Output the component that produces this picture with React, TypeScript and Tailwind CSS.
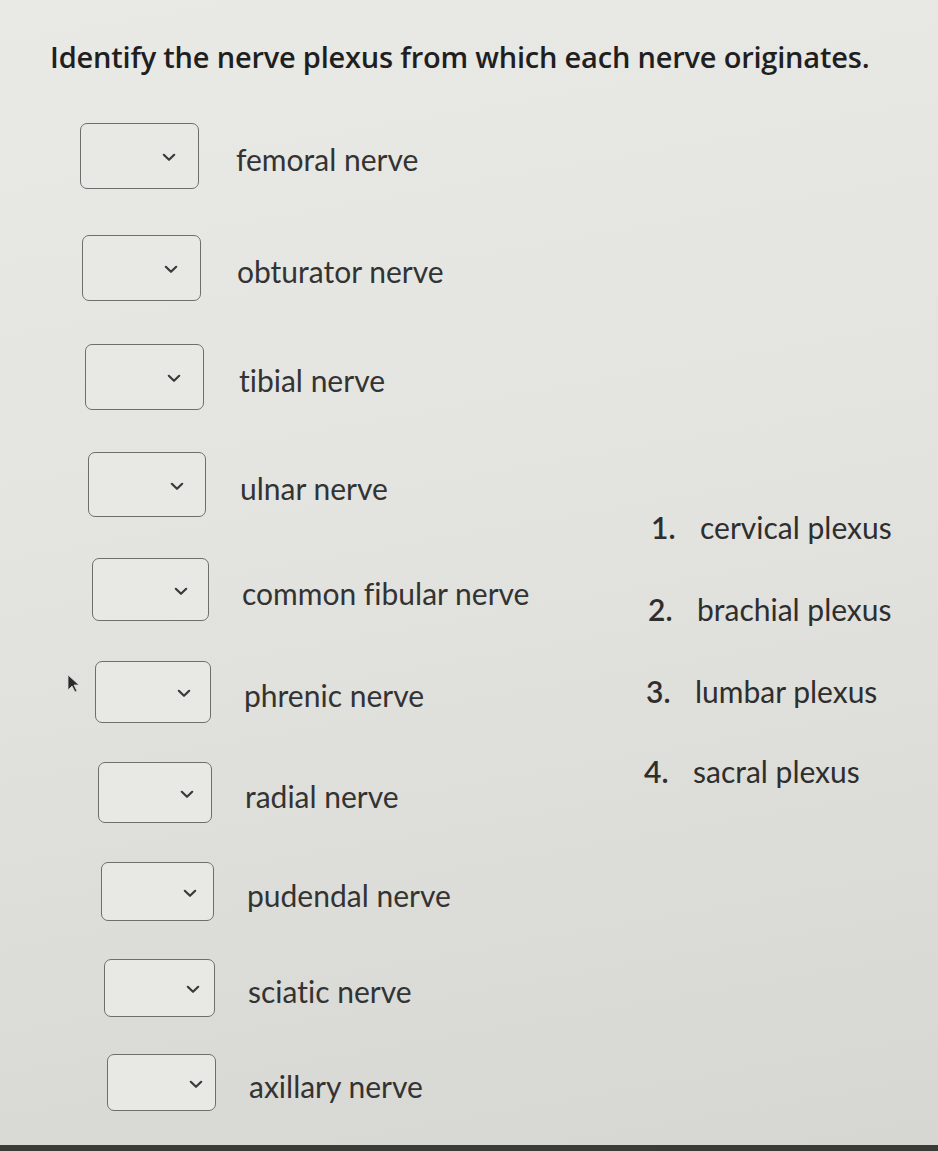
import React from "react";

type Row = { label: string; row: string; box: string; gap: string };

const rows: Row[] = [
  { label: "femoral nerve", row: "mt-[51px] ml-[80px]", box: "w-[119px] h-[66px]", gap: "ml-[37px]" },
  { label: "obturator nerve", row: "mt-[46px] ml-[82px]", box: "w-[119px] h-[66px]", gap: "ml-[36px]" },
  { label: "tibial nerve", row: "mt-[43px] ml-[85px]", box: "w-[119px] h-[66px]", gap: "ml-[35px]" },
  { label: "ulnar nerve", row: "mt-[42px] ml-[88px]", box: "w-[118px] h-[65px]", gap: "ml-[34px]" },
  { label: "common fibular nerve", row: "mt-[41px] ml-[92px]", box: "w-[117px] h-[63px]", gap: "ml-[33px]" },
  { label: "phrenic nerve", row: "mt-[40px] ml-[95px]", box: "w-[116px] h-[62px]", gap: "ml-[33px]" },
  { label: "radial nerve", row: "mt-[39px] ml-[98px]", box: "w-[114px] h-[61px]", gap: "ml-[33px]" },
  { label: "pudendal nerve", row: "mt-[39px] ml-[101px]", box: "w-[113px] h-[59px]", gap: "ml-[33px]" },
  { label: "sciatic nerve", row: "mt-[38px] ml-[104px]", box: "w-[111px] h-[58px]", gap: "ml-[33px]" },
  { label: "axillary nerve", row: "mt-[37px] ml-[107px]", box: "w-[109px] h-[57px]", gap: "ml-[33px]" },
];

const items = [
  { n: "1.", t: "cervical plexus", cls: "mt-[439px] ml-[31px]" },
  { n: "2.", t: "brachial plexus", cls: "mt-[50px] ml-[28px]" },
  { n: "3.", t: "lumbar plexus", cls: "mt-[50px] ml-[26px]" },
  { n: "4.", t: "sacral plexus", cls: "mt-[48px] ml-[24px]" },
];

function Chevron() {
  return (
    <svg width="14" height="9" viewBox="0 0 14 9" className="ml-[81px] mt-[3px]">
      <polyline points="1.8,1.8 7,6.8 12.2,1.8" fill="none" stroke="#3a3a3a" strokeWidth="2.2" strokeLinecap="round" strokeLinejoin="round" />
    </svg>
  );
}

export default function App() {
  return (
    <div className="relative flex h-[1151px] w-full flex-col overflow-hidden bg-[linear-gradient(170deg,#e9e9e5_0%,#e3e3df_45%,#d6d6d2_100%)] text-[#2b2b2b] [font-variant-ligatures:none]">
      <h1 className="pl-[50px] pt-[40px] text-[29px] leading-[34px] font-semibold tracking-[-0.2px] text-[#1f1f1f] [font-family:'Open_Sans',sans-serif]">
        Identify the nerve plexus from which each nerve originates.
      </h1>
      <div className="-mt-[2px] flex">
        <div className="flex w-[620px] flex-col">
          {rows.map((r) => (
            <div key={r.label} className={`flex items-center ${r.row}`}>
              <div className={`flex items-center rounded-[7px] border-[1.5px] border-[#6e6e6c] bg-[#e8e8e4] ${r.box}`}>
                <Chevron />
              </div>
              <span className={`${r.gap} mt-[6px] text-[30px] leading-[32px] text-[#333333] [font-family:Lato,sans-serif]`}>{r.label}</span>
            </div>
          ))}
        </div>
        <div className="flex flex-col">
          {items.map((it) => (
            <div key={it.n} className={`flex text-[30px] leading-[32px] text-[#2e2e2e] [font-family:Lato,sans-serif] ${it.cls}`}>
              <span className="w-[49px] font-semibold">{it.n}</span>
              <span>{it.t}</span>
            </div>
          ))}
        </div>
      </div>
      <svg width="16" height="20" viewBox="0 0 16 20" className="absolute left-[66px] top-[674px]">
        <path d="M2 1 L2 16 L6 12 L9 18 L11 17 L8 11 L13 11 Z" fill="#2a2a2a" stroke="#d9d9d6" strokeWidth="0.8" />
      </svg>
      <div className="mt-auto h-[6px] w-full bg-[#3a3a37]" />
    </div>
  );
}
